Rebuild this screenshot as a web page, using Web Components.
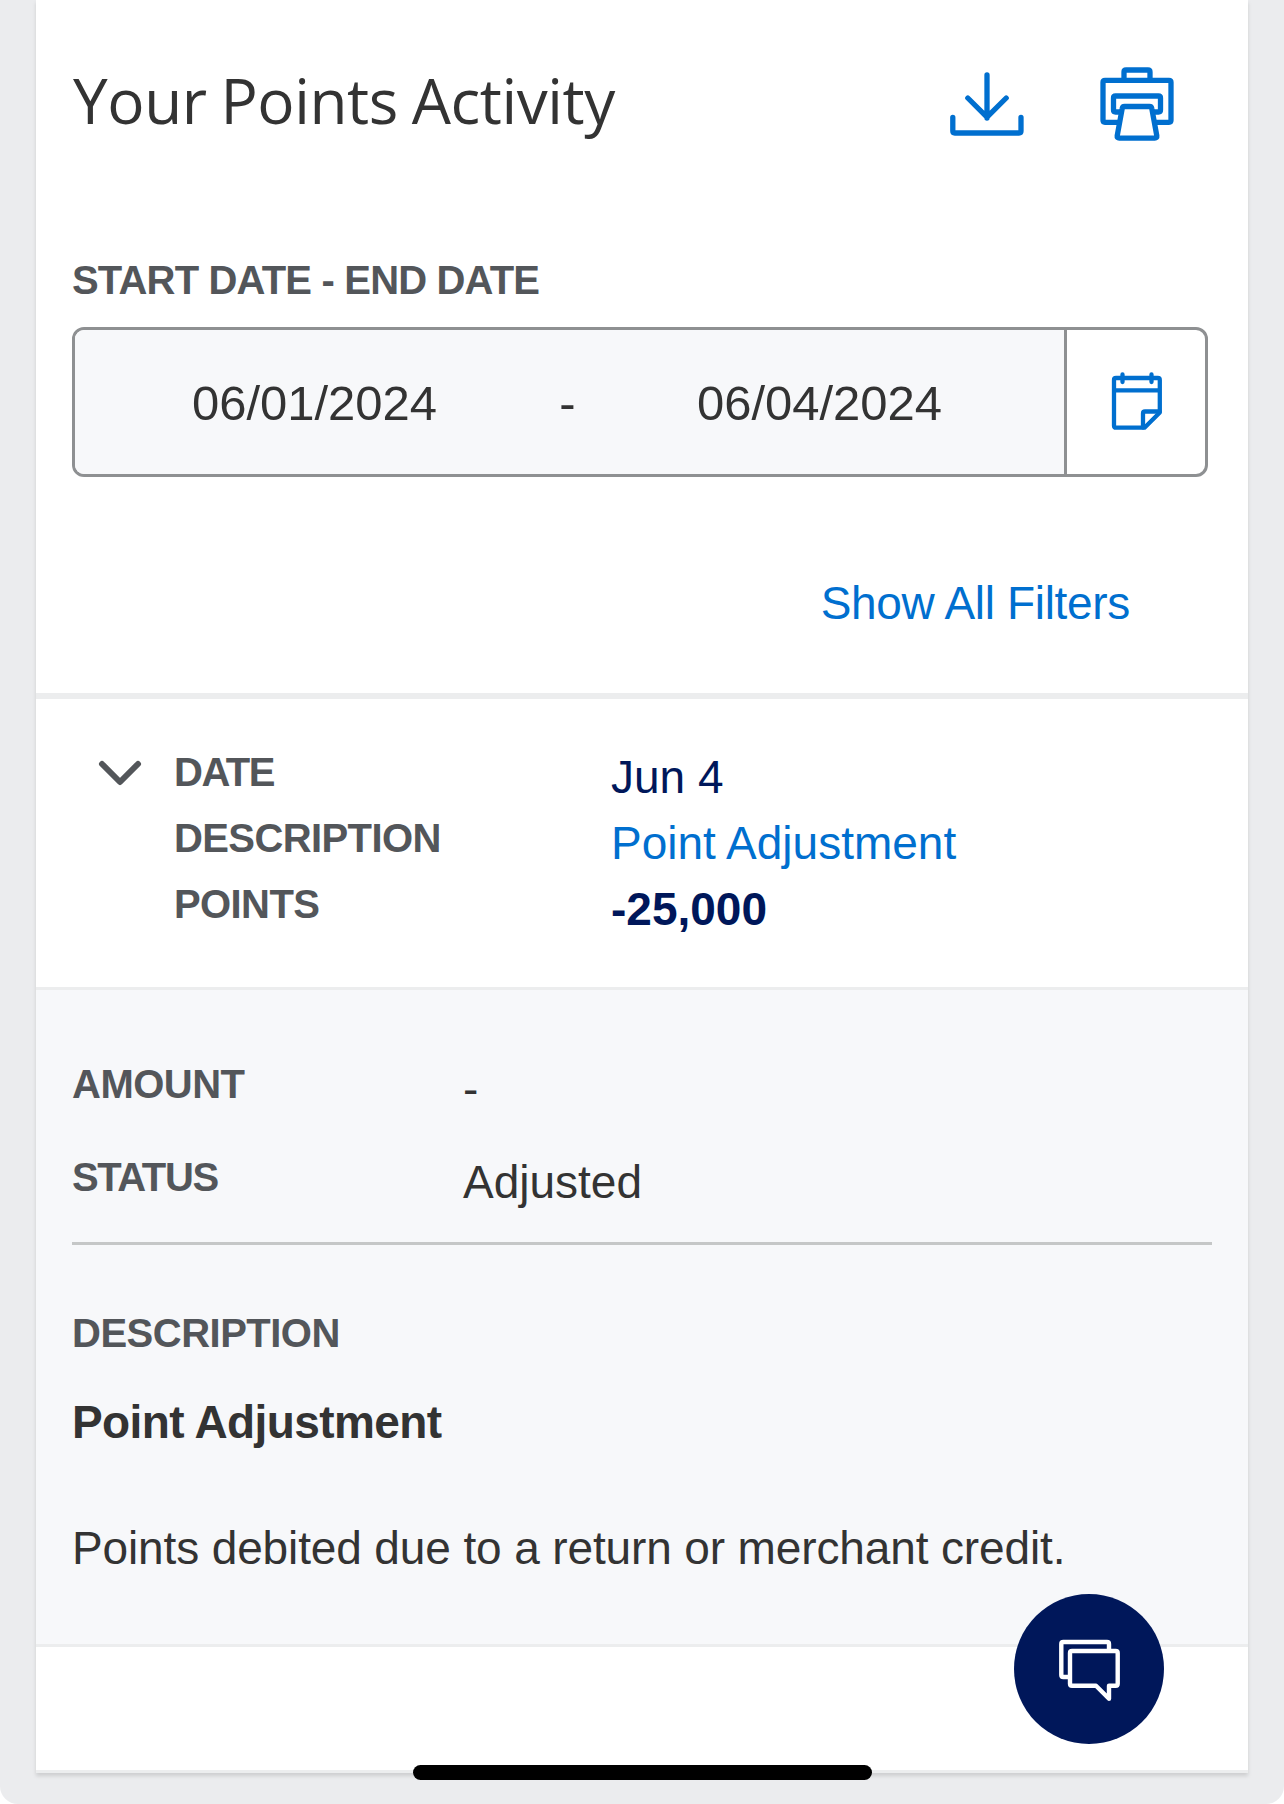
<!DOCTYPE html>
<html lang="en">
<head>
<meta charset="UTF-8">
<title>Your Points Activity</title>
<style>
    html {
        background: #fff;
    }

    body {
        margin: 0;
        font-family: "Liberation Sans", Arial, sans-serif;
        color: #333;
    }
</style>
</head>
<body>
<points-page>
    <points-header>Your Points Activity</points-header>
    <date-range label="START DATE - END DATE" start="06/01/2024" end="06/04/2024"></date-range>
    <filter-link>Show All Filters</filter-link>
    <activity-row date="Jun 4" description="Point Adjustment" points="-25,000"></activity-row>
    <activity-detail amount="-" status="Adjusted" description="Point Adjustment">Points debited due to a return or merchant credit.</activity-detail>
    <chat-button slot="overlay"></chat-button>
    <home-indicator slot="overlay"></home-indicator>
</points-page>

<script>
class PointsPage extends HTMLElement {
    constructor() {
        super();
        this.attachShadow({ mode: 'open' });
        this.shadowRoot.innerHTML = `
            <style>
                :host {
                    display: block;
                    position: relative;
                    box-sizing: border-box;
                    width: 1284px;
                    height: 1804px;
                    padding: 0 36px;
                    overflow: hidden;
                    background: #ebecee;
                    border-radius: 0 0 18px 18px;
                }

                .card {
                    box-sizing: border-box;
                    height: 1773px;
                    background: #fff;
                    border-bottom: 3px solid #ecedee;
                    box-shadow: 0 3px 4px rgba(0, 0, 0, 0.13);
                }
            </style>
            <div class="card"><slot></slot></div>
            <slot name="overlay"></slot>
        `;
    }
}

class PointsHeader extends HTMLElement {
    constructor() {
        super();
        this.attachShadow({ mode: 'open' });
        this.shadowRoot.innerHTML = `
            <style>
                :host {
                    display: flex;
                    justify-content: space-between;
                    height: 82px;
                    padding: 63px 74px 0 37px;
                }

                h1 {
                    margin: 0;
                    font: 400 62px/74px "Open Sans", sans-serif;
                    letter-spacing: -0.4px;
                    word-spacing: -2px;
                    white-space: nowrap;
                }

                .actions {
                    display: flex;
                    align-items: center;
                    gap: 76px;
                }

                svg {
                    display: block;
                    fill: none;
                    stroke: #006fcf;
                    stroke-width: 5.3;
                    stroke-linecap: round;
                    stroke-linejoin: round;
                }
            </style>
            <h1><slot></slot></h1>
            <div class="actions">
                <svg width="74" height="74" viewBox="0 0 74 74">
                    <path d="M37 8v43M17.8 31 37 50.2 56.2 31"/>
                    <path d="M2.8 50.5V64q0 2 2 2H69q2 0 2-2V50.5"/>
                </svg>
                <svg width="74" height="74" viewBox="0 0 74 74">
                    <path d="M24 12V5q0-2 2-2h22q2 0 2 2v7"/>
                    <path d="M18 55.3H5q-2 0-2-2v-38q0-2 2-2H69q2 0 2 2v38q0 2-2 2H56"/>
                    <path d="M20 45h-4.500q-2 0-2-2V31q0-2 2-2h43q2 0 2 2v12q0 2-2 2H54"/>
                    <path d="M24.500 39.500h25q2 0 2.300 2l5 27.300q.3 2.300-2 2.300H19.200q-2.300 0-2-2.300l5-27.300q.3-2 2.300-2Z" fill="#fff"/>
                </svg>
            </div>
        `;
    }
}

class DateRange extends HTMLElement {
    constructor() {
        super();
        this.attachShadow({ mode: 'open' });
    }

    connectedCallback() {
        this.shadowRoot.innerHTML = `
            <style>
                :host {
                    display: block;
                    padding: 111px 40px 0 36px;
                }

                .label {
                    font-size: 40px;
                    font-weight: bold;
                    line-height: 48px;
                    letter-spacing: -0.82px;
                    color: #53565a;
                    white-space: nowrap;
                }

                .box {
                    display: flex;
                    box-sizing: border-box;
                    height: 150px;
                    margin-top: 23px;
                    border: 3px solid #8e9092;
                    border-radius: 12px;
                    overflow: hidden;
                }

                .dates {
                    flex: 1;
                    display: grid;
                    grid-template-columns: 479px 27px 1fr;
                    align-items: center;
                    padding: 2px 6px 0 0;
                    text-align: center;
                    background: #f7f8fa;
                    font-size: 49px;
                    line-height: 60px;
                }

                .calendar {
                    display: flex;
                    align-items: center;
                    justify-content: center;
                    width: 138px;
                    border-left: 3px solid #8e9092;
                }

                svg {
                    fill: none;
                    stroke: #006fcf;
                    stroke-width: 4.3;
                    stroke-linecap: round;
                    stroke-linejoin: round;
                }
            </style>
            <div class="label">${this.getAttribute('label')}</div>
            <div class="box">
                <div class="dates">
                    <span>${this.getAttribute('start')}</span>
                    <span>-</span>
                    <span>${this.getAttribute('end')}</span>
                </div>
                <div class="calendar">
                    <svg width="56" height="60" viewBox="0 0 56 60">
                        <path d="M36.500 55.700H8q-2 0-2-2V8q0-2 2-2h41.800q2 0 2 2v32.500ZM6 18.300h45.800M14.500 2.500v7.500M43.500 2.500v7.500"/>
                        <path d="M51.500 39.500H37q-2 0-2 2v14"/>
                    </svg>
                </div>
            </div>
        `;
    }
}

class FilterLink extends HTMLElement {
    constructor() {
        super();
        this.attachShadow({ mode: 'open' });
        this.shadowRoot.innerHTML = `
            <style>
                :host {
                    display: flex;
                    justify-content: flex-end;
                    height: 117px;
                    padding: 99px 118px 0 0;
                    border-bottom: 6px solid #ecedee;
                    font-size: 46px;
                    line-height: 54px;
                    letter-spacing: -0.32px;
                    color: #006fcf;
                }
            </style>
            <span><slot></slot></span>
        `;
    }
}

class ActivityRow extends HTMLElement {
    constructor() {
        super();
        this.attachShadow({ mode: 'open' });
    }

    connectedCallback() {
        this.shadowRoot.innerHTML = `
            <style>
                :host {
                    display: grid;
                    grid-template-columns: 77px 437px 1fr;
                    height: 248px;
                    padding: 40px 0 0 61px;
                    border-bottom: 3px solid #ecedee;
                    line-height: 66px;
                    white-space: nowrap;
                }

                svg {
                    margin-top: 20px;
                    fill: none;
                    stroke: #53565a;
                    stroke-width: 6;
                    stroke-linecap: round;
                    stroke-linejoin: round;
                }

                .labels {
                    font-size: 40px;
                    font-weight: bold;
                    letter-spacing: -0.6px;
                    color: #53565a;
                }

                .tight {
                    letter-spacing: -1.5px;
                }

                .values {
                    padding-top: 5px;
                    font-size: 46px;
                    color: #00175a;
                }

                .link {
                    color: #006fcf;
                }

                .points {
                    font-weight: bold;
                }
            </style>
            <svg width="46" height="28" viewBox="0 0 46 28"><path d="M5 5 23 23 41 5"/></svg>
            <div class="labels">
                <div class="tight">DATE</div>
                <div>DESCRIPTION</div>
                <div>POINTS</div>
            </div>
            <div class="values">
                <div>${this.getAttribute('date')}</div>
                <div class="link">${this.getAttribute('description')}</div>
                <div class="points">${this.getAttribute('points')}</div>
            </div>
        `;
    }
}

class ActivityDetail extends HTMLElement {
    constructor() {
        super();
        this.attachShadow({ mode: 'open' });
    }

    connectedCallback() {
        this.shadowRoot.innerHTML = `
            <style>
                :host {
                    display: block;
                    height: 593px;
                    padding: 61px 36px 0;
                    background: #f7f8fa;
                    border-bottom: 3px solid #ecedee;
                    font-size: 46px;
                    line-height: 66px;
                    white-space: nowrap;
                }

                .facts {
                    display: grid;
                    grid-template-columns: 391px 1fr;
                    grid-auto-rows: 93px;
                    height: 191px;
                    border-bottom: 3px solid #c5c7c7;
                }

                .label {
                    font-size: 40px;
                    font-weight: bold;
                    letter-spacing: -0.5px;
                    color: #53565a;
                }

                .tight {
                    letter-spacing: -1.4px;
                }

                .value {
                    padding-top: 5px;
                }

                .description {
                    padding-top: 55px;
                }

                h2 {
                    margin: 23px 0 0;
                    font-size: 46px;
                    line-height: 66px;
                    letter-spacing: -0.6px;
                }

                p {
                    margin: 60px 0 0;
                    letter-spacing: -0.13px;
                }
            </style>
            <div class="facts">
                <div class="label">AMOUNT</div>
                <div class="value">${this.getAttribute('amount')}</div>
                <div class="label tight">STATUS</div>
                <div class="value">${this.getAttribute('status')}</div>
            </div>
            <div class="description">
                <div class="label">DESCRIPTION</div>
                <h2>${this.getAttribute('description')}</h2>
                <p><slot></slot></p>
            </div>
        `;
    }
}

class ChatButton extends HTMLElement {
    constructor() {
        super();
        this.attachShadow({ mode: 'open' });
        this.shadowRoot.innerHTML = `
            <style>
                :host {
                    display: block;
                    position: absolute;
                    right: 120px;
                    bottom: 60px;
                    width: 150px;
                    height: 150px;
                    border-radius: 50%;
                    background: #00175a;
                }

                svg {
                    display: block;
                    fill: none;
                    stroke: #fff;
                    stroke-width: 4.4;
                    stroke-linejoin: round;
                }
            </style>
            <svg width="150" height="150" viewBox="0 0 150 150">
                <path d="M56 83h-6.700q-2 0-2-2V50q0-2 2-2H93q2 0 2 2v7"/>
                <path d="M58 57h43.700q2 0 2 2v30.700q0 2-2 2H95v13L82 91.700H58q-2 0-2-2V59q0-2 2-2Z"/>
            </svg>
        `;
    }
}

class HomeIndicator extends HTMLElement {
    constructor() {
        super();
        this.attachShadow({ mode: 'open' });
        this.shadowRoot.innerHTML = `
            <style>
                :host {
                    display: block;
                    position: absolute;
                    left: 413px;
                    bottom: 24px;
                    width: 459px;
                    height: 15px;
                    border-radius: 8px;
                    background: #000;
                }
            </style>
        `;
    }
}

customElements.define('points-page', PointsPage);
customElements.define('points-header', PointsHeader);
customElements.define('date-range', DateRange);
customElements.define('filter-link', FilterLink);
customElements.define('activity-row', ActivityRow);
customElements.define('activity-detail', ActivityDetail);
customElements.define('chat-button', ChatButton);
customElements.define('home-indicator', HomeIndicator);
</script>
</body>
</html>
